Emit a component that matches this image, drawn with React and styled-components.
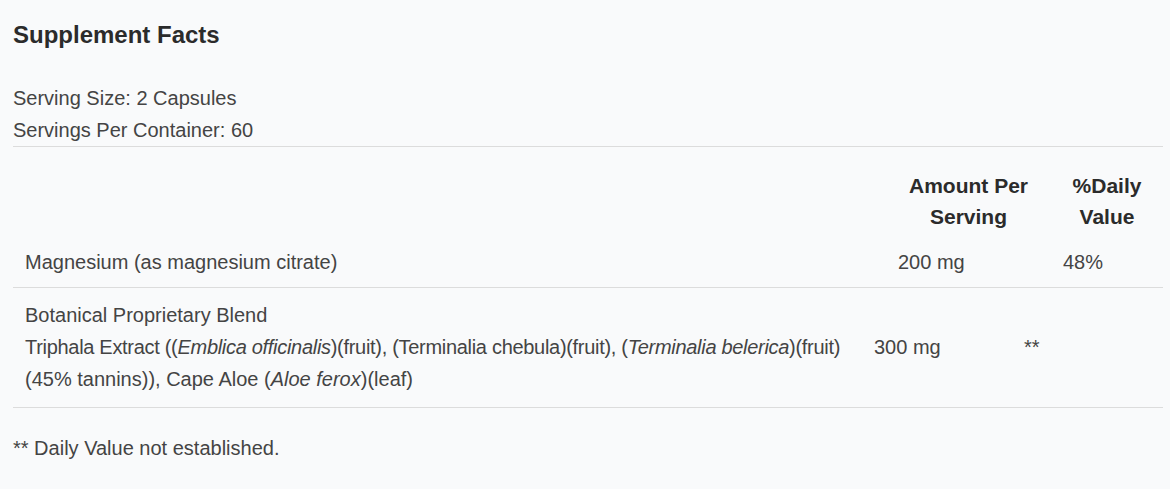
import styled, { createGlobalStyle } from "styled-components";

const GlobalStyle = createGlobalStyle`
  html, body {
    margin: 0;
    padding: 0;
    background: #f9fafb;
  }
  body {
    font-family: "Liberation Sans", Arial, sans-serif;
    color: #444;
  }
`;

const Wrapper = styled.section`
  padding: 21px 7px 26px 13px;
  font-size: 20px;
  line-height: 32px;
`;

const Title = styled.h2`
  margin: 0 0 33px;
  font-size: 24px;
  line-height: 28px;
  font-weight: 700;
  color: #2b2b2b;
`;

const ServingInfo = styled.div`
  border-bottom: 1px solid #dcdcdc;
`;

const Table = styled.div`
  display: flex;
  flex-direction: column;
`;

const Row = styled.div`
  display: grid;
  grid-template-columns: 1fr ${(props) => props.$cols};
  align-items: center;
  border-bottom: ${(props) => (props.$noLine ? "none" : "1px solid #dcdcdc")};
  padding: ${(props) => props.$pad || "10px 0"};
`;

const Cell = styled.div`
  padding: 0 12px;
`;

const HeadCell = styled(Cell)`
  font-size: 21px;
  font-weight: 700;
  color: #2b2b2b;
  text-align: center;
  line-height: 31px;
`;

const Line = styled.span`
  display: block;
  white-space: nowrap;
  letter-spacing: ${(props) => props.$tight || "normal"};
`;

const Note = styled.p`
  margin: 24px 0 0;
`;

export default function App() {
  return (
    <>
      <GlobalStyle />
      <Wrapper>
        <Title>Supplement Facts</Title>
        <ServingInfo>
          Serving Size: 2 Capsules
          <br />
          Servings Per Container: 60
        </ServingInfo>

        <Table>
          <Row $cols="165px 112px" $noLine $pad="23px 0 0">
            <Cell />
            <HeadCell>Amount Per Serving</HeadCell>
            <HeadCell>%Daily Value</HeadCell>
          </Row>
          <Row $cols="165px 112px" $pad="14px 0 9px">
            <Cell>Magnesium (as magnesium citrate)</Cell>
            <Cell>200 mg</Cell>
            <Cell>48%</Cell>
          </Row>
        </Table>

        <Table>
          <Row $cols="150px 151px" $pad="11px 0 12px">
            <Cell>
              <Line>Botanical Proprietary Blend</Line>
              <Line $tight="-0.3px">
                Triphala Extract ((<em>Emblica officinalis</em>)(fruit),
                (Terminalia chebula)(fruit), (<em>Terminalia belerica</em>)(fruit)
              </Line>
              <Line>
                (45% tannins)), Cape Aloe (<em>Aloe ferox</em>)(leaf)
              </Line>
            </Cell>
            <Cell>300 mg</Cell>
            <Cell>**</Cell>
          </Row>
        </Table>

        <Note>** Daily Value not established.</Note>
      </Wrapper>
    </>
  );
}
